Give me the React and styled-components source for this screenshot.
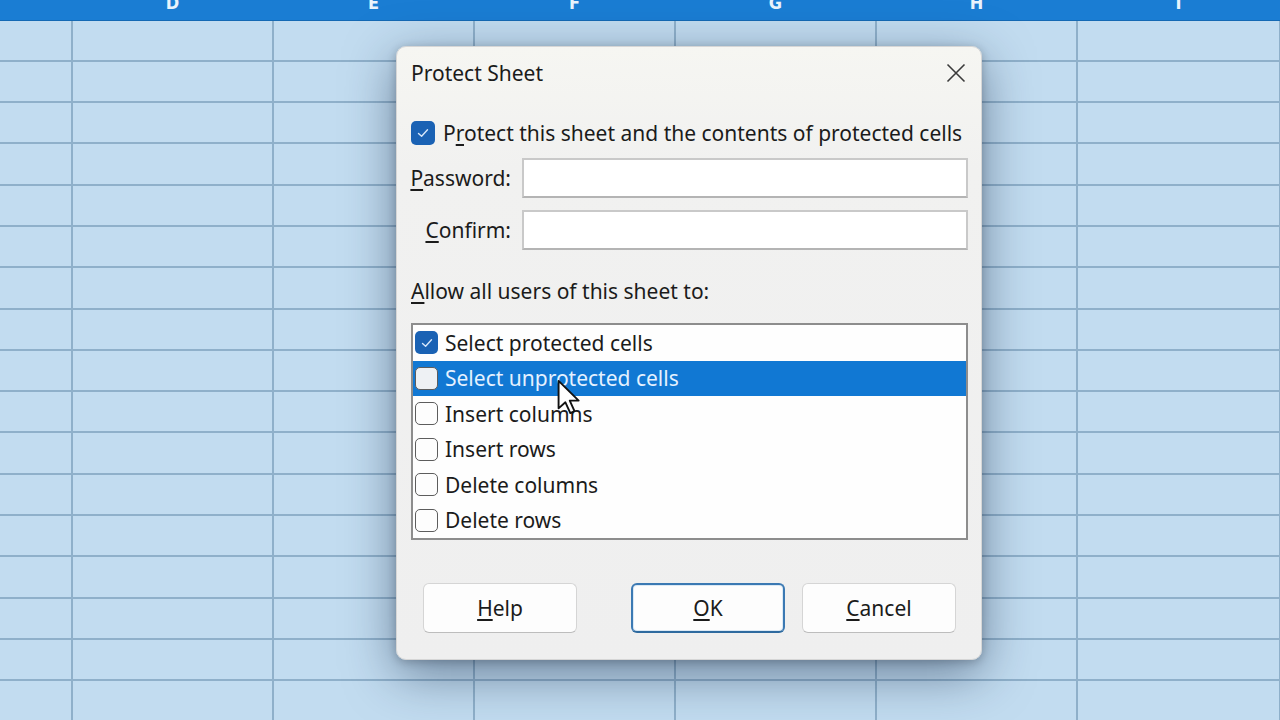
import React from "react"
import styled, { createGlobalStyle } from "styled-components"

const GlobalStyle = createGlobalStyle`
    html, body {
        margin: 0;
        padding: 0;
        width: 1280px;
        height: 720px;
        overflow: hidden;
        font-family: "Noto Sans", "Open Sans", sans-serif;
    }
`

const COLS = ["", "D", "E", "F", "G", "H", "I"]
const ROW_COUNT = 17

// The sheet behind the dialog
const Sheet = styled.div`
    position: relative;
    width: 1280px;
    height: 720px;
    background: #c2dcf0;
    overflow: hidden;
`
const SheetGrid = styled.div`
    display: grid;
    grid-template-columns: 72px repeat(5, 201px) 1fr;
    grid-auto-rows: 41.3px;
    grid-template-rows: 20.5px;
`
const HeadCell = styled.div`
    background: #1a7dd3;
    color: #e9f3fc;
    font-family: "DejaVu Sans Condensed", "DejaVu Sans", sans-serif;
    font-weight: bold;
    font-size: 18px;
    line-height: 6px;
    text-align: center;
    overflow: hidden;
    border-bottom: 1px solid #1469b4;
`
const Cell = styled.div`
    border-right: 2px solid #8fb0ca;
    border-bottom: 2px solid #8fb0ca;
    box-sizing: border-box;
    margin-right: -1px;
`

// Dialog
const Dialog = styled.div`
    position: absolute;
    left: 396px;
    top: 46px;
    width: 586px;
    height: 614px;
    box-sizing: border-box;
    background: linear-gradient(180deg, #f6f6f2 0%, #f1f1f0 20%, #efefef 100%);
    border-radius: 10px;
    border: 1px solid #d6d6d6;
    box-shadow: 0 14px 50px rgba(20, 40, 70, 0.5), 0 2px 10px rgba(0, 0, 0, 0.22);
    display: flex;
    flex-direction: column;
    padding: 0 14px 0 14px;
    color: #1b1b1b;
    font-size: 21px;
`
const TitleBar = styled.div`
    display: flex;
    align-items: center;
    justify-content: space-between;
    height: 52px;
`
const Title = styled.div`
    font-size: 21px;
`
const Close = styled.svg`
    width: 20px;
    height: 20px;
    margin-right: 1px;
`
const CheckRow = styled.label`
    display: flex;
    align-items: center;
    gap: 8px;
    height: 24px;
    margin-top: ${p => p.$top || 0}px;
    white-space: nowrap;
`
const Box = styled.span`
    flex: none;
    width: ${p => p.$size}px;
    height: ${p => p.$size}px;
    box-sizing: border-box;
    border-radius: 5px;
    display: flex;
    align-items: center;
    justify-content: center;
    background: ${p => (p.$checked ? "#1a62b4" : p.$dim ? "#eef1f4" : "#fdfdfd")};
    border: ${p => (p.$checked ? "none" : "1.5px solid #5d5d5d")};
`
const FieldRow = styled.div`
    display: flex;
    align-items: center;
    height: 40px;
    margin-top: ${p => p.$top}px;
`
const FieldLabel = styled.div`
    flex: none;
    width: 111px;
    box-sizing: border-box;
    padding-right: 11px;
    display: flex;
    justify-content: flex-end;
    white-space: nowrap;
`
const Input = styled.div`
    flex: none;
    width: 446px;
    height: 40px;
    box-sizing: border-box;
    background: #ffffff;
    border: 2px solid #c9c9c9;
    border-bottom-color: #b4b4b4;
`
const Key = styled.span`
    text-decoration: underline;
    text-underline-offset: 3px;
    text-decoration-thickness: 1.5px;
`
const Caption = styled.div`
    margin-top: 26px;
    height: 30px;
    line-height: 30px;
`
const List = styled.div`
    margin-top: 17px;
    width: 557px;
    height: 217px;
    box-sizing: border-box;
    border: 2px solid #8d8d8d;
    background: #fefefe;
    display: flex;
    flex-direction: column;
`
const Item = styled.div`
    display: flex;
    align-items: center;
    gap: 7px;
    height: 35.5px;
    padding-left: 2px;
    background: ${p => (p.$selected ? "#1178d3" : "transparent")};
    color: ${p => (p.$selected ? "#e4f1ff" : "#1b1b1b")};
    white-space: nowrap;
`
const Buttons = styled.div`
    display: flex;
    align-items: center;
    margin-top: 43px;
    padding-left: 12px;
`
const Button = styled.div`
    width: 154px;
    height: 50px;
    box-sizing: border-box;
    margin-left: ${p => p.$gap || 0}px;
    display: flex;
    align-items: center;
    justify-content: center;
    background: #fdfdfd;
    border-radius: 6px;
    border: ${p => (p.$primary ? "2px solid #3b79b3" : "1px solid #d5d5d5")};
    border-bottom-color: ${p => (p.$primary ? "#2e6a9f" : "#bdbdbd")};
    box-shadow: ${p => (p.$primary ? "inset 0 0 0 1px #dbe9f5" : "none")};
    font-size: 21px;
`
const Cursor = styled.svg`
    position: absolute;
    left: 556px;
    top: 379px;
    width: 26px;
    height: 36px;
`

const Check = () => (
    <svg width="14" height="14" viewBox="0 0 14 14">
        <path d="M2.5 7.4 L5.6 10.3 L11.5 3.8" fill="none" stroke="#d6e6fa" strokeWidth="1.4" strokeLinecap="round" strokeLinejoin="round" />
    </svg>
)

const permissions = [
    { text: "Select protected cells", checked: true },
    { text: "Select unprotected cells", selected: true },
    { text: "Insert columns" },
    { text: "Insert rows" },
    { text: "Delete columns" },
    { text: "Delete rows" },
]

const App = () => {
    const cells = []
    COLS.forEach((c, i) => cells.push(<HeadCell key={"h" + i}>{c}</HeadCell>))
    for (let r = 0; r < ROW_COUNT; r++) {
        COLS.forEach((c, i) => cells.push(<Cell key={r + "-" + i} />))
    }

    return (
        <Sheet>
            <GlobalStyle />
            <SheetGrid>{cells}</SheetGrid>

            <Dialog>
                <TitleBar>
                    <Title>Protect Sheet</Title>
                    <Close viewBox="0 0 20 20">
                        <path d="M1.5 1.5 L18.5 18.5 M18.5 1.5 L1.5 18.5" stroke="#3a3a3a" strokeWidth="1.6" fill="none" />
                    </Close>
                </TitleBar>

                <CheckRow $top={22}>
                    <Box $size={24} $checked><Check /></Box>
                    <span>P<Key>r</Key>otect this sheet and the contents of protected cells</span>
                </CheckRow>

                <FieldRow $top={13}>
                    <FieldLabel><span><Key>P</Key>assword:</span></FieldLabel>
                    <Input />
                </FieldRow>
                <FieldRow $top={12}>
                    <FieldLabel><span><Key>C</Key>onfirm:</span></FieldLabel>
                    <Input />
                </FieldRow>

                <Caption><Key>A</Key>llow all users of this sheet to:</Caption>

                <List>
                    {permissions.map(p => (
                        <Item key={p.text} $selected={p.selected}>
                            <Box $size={23} $checked={p.checked} $dim={p.selected}>
                                {p.checked && <Check />}
                            </Box>
                            {p.text}
                        </Item>
                    ))}
                </List>

                <Buttons>
                    <Button><span><Key>H</Key>elp</span></Button>
                    <Button $gap={54} $primary><span><Key>O</Key>K</span></Button>
                    <Button $gap={17}><span><Key>C</Key>ancel</span></Button>
                </Buttons>
            </Dialog>

            <Cursor viewBox="0 0 13 19">
                <path d="M1 1 L1 15.5 L4.6 12.3 L7.2 18 L9.4 17 L6.9 11.4 L11.6 11.4 Z" fill="#ffffff" stroke="#111" strokeWidth="1" strokeLinejoin="round" />
            </Cursor>
        </Sheet>
    )
}

export default App
